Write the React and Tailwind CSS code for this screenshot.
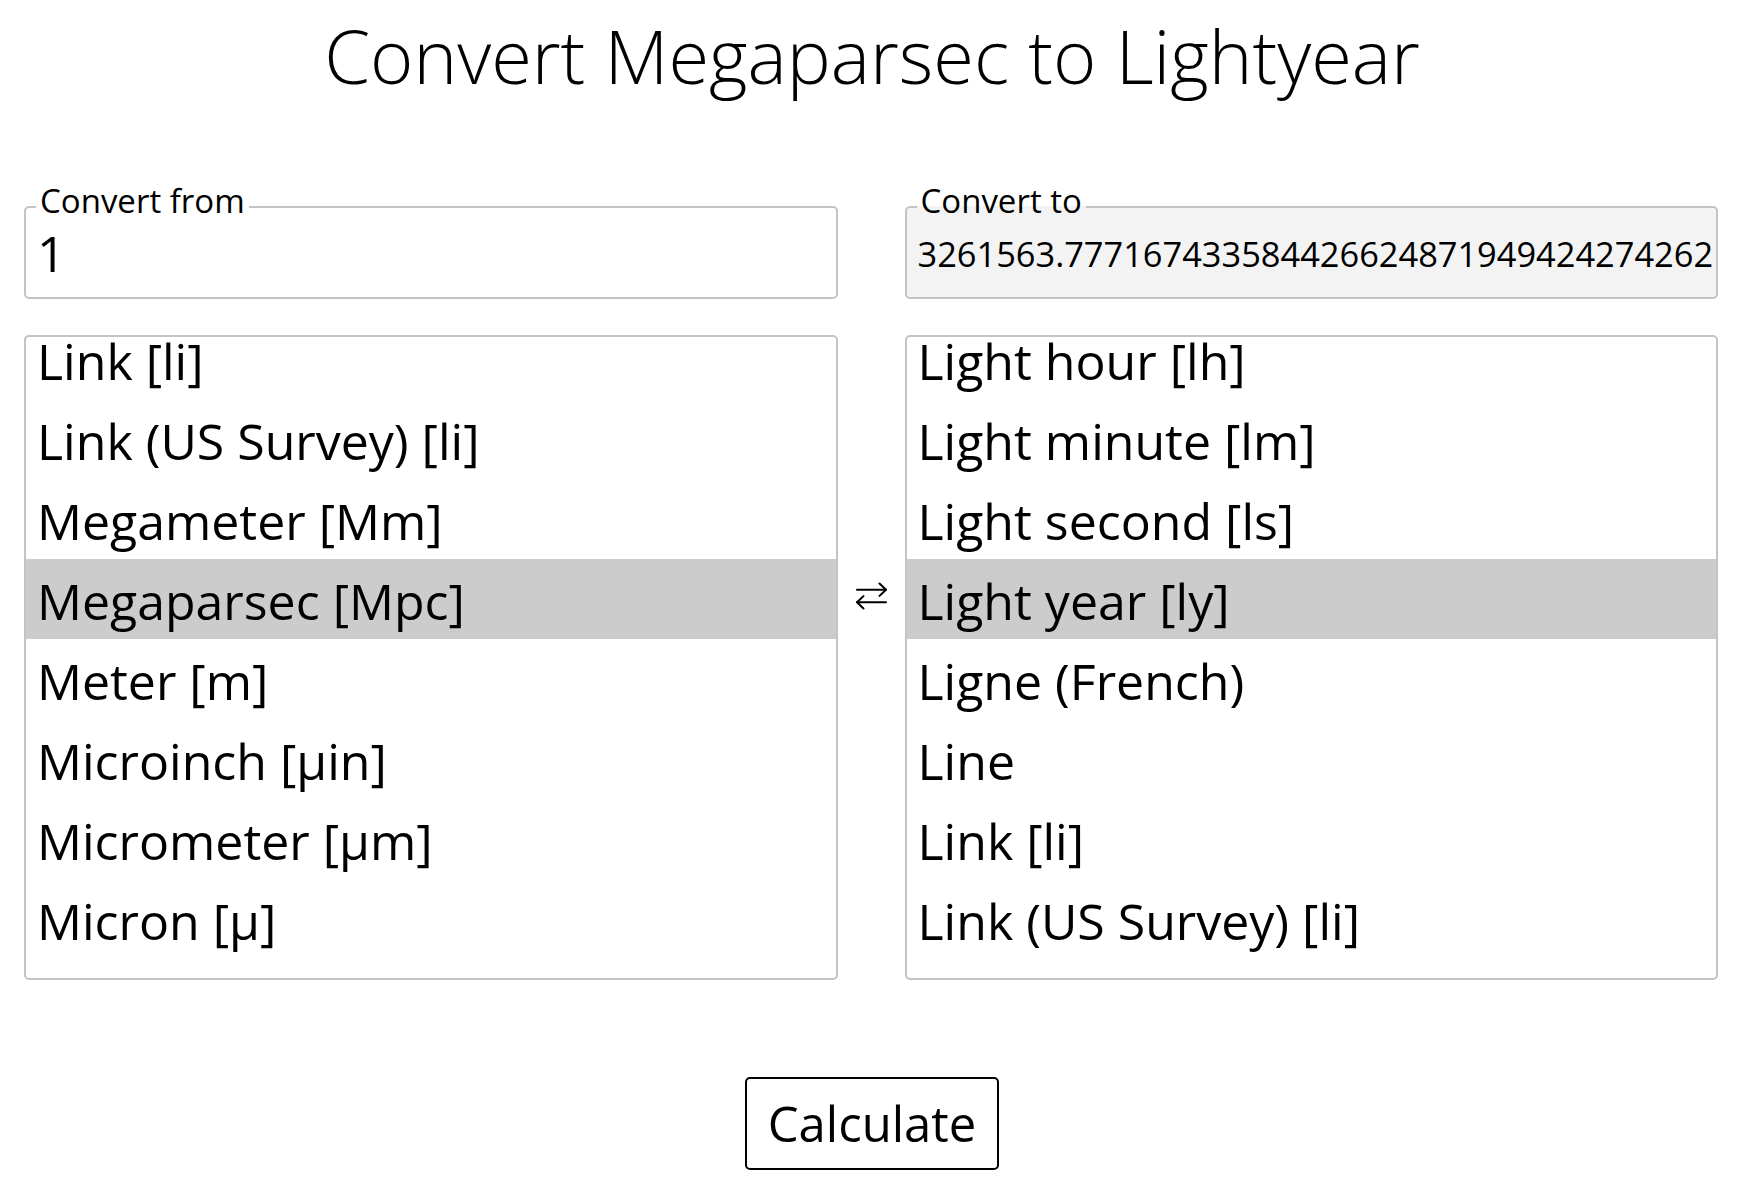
import React, { useRef, useLayoutEffect } from 'react';

const fromUnits = [
  'Link [li]',
  'Link (US Survey) [li]',
  'Megameter [Mm]',
  'Megaparsec [Mpc]',
  'Meter [m]',
  'Microinch [µin]',
  'Micrometer [µm]',
  'Micron [µ]',
];

const toUnits = [
  'Light hour [lh]',
  'Light minute [lm]',
  'Light second [ls]',
  'Light year [ly]',
  'Ligne (French)',
  'Line',
  'Link [li]',
  'Link (US Survey) [li]',
];

const UnitList = ({ items, selected }) => {
  const listRef = useRef(null);

  useLayoutEffect(() => {
    if (listRef.current) listRef.current.scrollTop = 18;
  }, []);

  return (
    <div
      ref={listRef}
      className="min-w-0 h-[645px] overflow-hidden border-2 border-[#c4c4c4] rounded-[5px] bg-white"
    >
      {items.map((item) => (
        <div
          key={item}
          className={`h-[80px] pt-[4px] pl-[11px] leading-[76px] text-[50px] whitespace-nowrap ${
            item === selected ? 'bg-[#cccccc]' : ''
          }`}
        >
          {item}
        </div>
      ))}
      <div className="h-[40px]"></div>
    </div>
  );
};

const SwapIcon = () => (
  <svg width="31" height="30" viewBox="0 0 31 30" fill="none" stroke="black" strokeWidth="2" strokeLinecap="round">
    <path d="M1 7.7h29" />
    <path d="M23.5 1.5L30 7.7L23.5 13.9" />
    <path d="M1 20.3h29" />
    <path d="M7.5 14.1L1 20.3L7.5 26.5" />
  </svg>
);

const App = () => {
  return (
    <div className="min-h-screen bg-white text-black pt-[19px] font-['Open_Sans',sans-serif]">
      <h1 className="text-center text-[74px] leading-none font-light">Convert Megaparsec to Lightyear</h1>

      <div className="mt-[91px] pl-[24px] pr-[26px] grid grid-cols-[1fr_67px_1fr]">
        <fieldset className="min-w-0 border-2 border-[#c4c4c4] rounded-[5px] bg-white">
          <legend className="ml-[10px] px-[4px] pb-[12px] text-[33px] leading-[33px]">Convert from</legend>
          <div className="h-[68px] px-[11px] text-[50px] leading-[48px]">1</div>
        </fieldset>
        <div></div>
        <fieldset className="min-w-0 border-2 border-[#c4c4c4] rounded-[5px] bg-[#f3f3f3]">
          <legend className="ml-[10px] px-[4px] pb-[12px] text-[33px] leading-[33px]">Convert to</legend>
          <div className="h-[68px] px-[11px] text-[34.4px] leading-[49px] whitespace-nowrap overflow-hidden">
            3261563.777167433584426624871949424274262
          </div>
        </fieldset>
      </div>

      <div className="mt-[36px] pl-[24px] pr-[26px] grid grid-cols-[1fr_67px_1fr]">
        <UnitList items={fromUnits} selected="Megaparsec [Mpc]" />
        <div className="flex justify-center pt-[247px]">
          <SwapIcon />
        </div>
        <UnitList items={toUnits} selected="Light year [ly]" />
      </div>

      <div className="mt-[97px] flex justify-center pb-[19px]">
        <button className="w-[254px] h-[93px] border-2 border-black rounded-[5px] bg-white text-[49px] leading-none">
          Calculate
        </button>
      </div>
    </div>
  );
};

export default App;
